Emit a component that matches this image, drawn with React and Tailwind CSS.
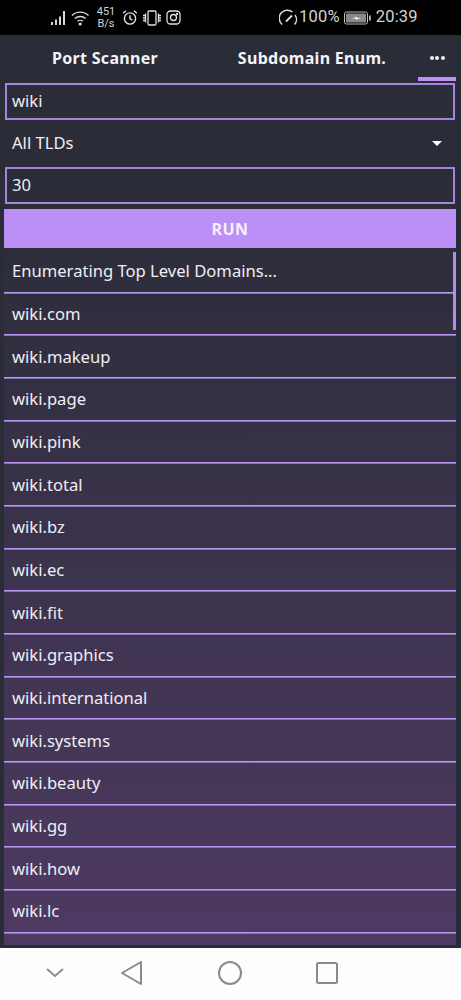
const domains = [
  'Enumerating Top Level Domains...',
  'wiki.com',
  'wiki.makeup',
  'wiki.page',
  'wiki.pink',
  'wiki.total',
  'wiki.bz',
  'wiki.ec',
  'wiki.fit',
  'wiki.graphics',
  'wiki.international',
  'wiki.systems',
  'wiki.beauty',
  'wiki.gg',
  'wiki.how',
  'wiki.lc',
];

const StatusBar = () => (
  <div className="h-[35px] bg-black flex items-center text-[#d4d4d4] font-['Roboto',sans-serif]">
    {/* signal */}
    <svg className="ml-[50px]" width="18" height="18" viewBox="0 0 18 18" fill="#d8d8d8">
      <rect x="1" y="13" width="2" height="3" />
      <rect x="5" y="10.5" width="2" height="5.5" />
      <rect x="9" y="7.5" width="2" height="8.5" />
      <rect x="13" y="2" width="2" height="14" />
    </svg>
    {/* wifi */}
    <svg className="ml-[3px]" width="19" height="18" viewBox="0 0 19 18" fill="none" stroke="#d8d8d8" strokeWidth="1.4">
      <path d="M1 6.5C5.5 2 13 2 17.5 6.5" />
      <path d="M3.8 9.5C6.8 6.8 11.7 6.8 14.7 9.5" />
      <path d="M6.6 12.3C8 11 10.5 11 11.9 12.3" />
      <circle cx="9.2" cy="15" r="0.9" fill="#d8d8d8" />
    </svg>
    <div className="ml-[5px] w-[22px] text-[11px] leading-[12px] text-center">
      <div>451</div>
      <div>B/s</div>
    </div>
    {/* alarm */}
    <svg className="ml-[5px]" width="16" height="17" viewBox="0 0 16 17" fill="none" stroke="#e0e0e0" strokeWidth="1.4">
      <circle cx="8" cy="9.5" r="5.6" />
      <path d="M8 6.3V9.7L10.4 11.2" />
      <path d="M1.2 4.2L4 1.8M14.8 4.2L12 1.8" />
    </svg>
    {/* vibrate */}
    <svg className="ml-[4px]" width="20" height="16" viewBox="0 0 20 16" fill="none" stroke="#e0e0e0" strokeWidth="1.3">
      <rect x="6" y="1" width="8" height="14" rx="1.2" />
      <path d="M3.5 3.5V12.5M1 5.5H3M1 8H3M1 10.5H3M16.5 3.5V12.5M17 5.5H19M17 8H19M17 10.5H19" />
    </svg>
    {/* instagram */}
    <svg className="ml-[4px]" width="15" height="15" viewBox="0 0 15 15" fill="none" stroke="#e0e0e0" strokeWidth="1.3">
      <rect x="1" y="1" width="13" height="13" rx="3.5" />
      <circle cx="7.5" cy="7.5" r="3" />
      <circle cx="11" cy="4" r="0.5" fill="#e0e0e0" />
    </svg>
    {/* gauge */}
    <svg className="ml-[98px]" width="19" height="18" viewBox="0 0 19 18" fill="none" stroke="#d8d8d8" strokeWidth="1.5">
      <path d="M3.2 15.5A7.5 7.5 0 0 1 13.5 3" />
      <path d="M16 6A7.5 7.5 0 0 1 15.5 15.5" />
      <path d="M7 12.5L13 6.5" strokeWidth="2" />
    </svg>
    <span className="ml-[1px] text-[16.5px] tracking-[0.2px]">100%</span>
    {/* battery */}
    <svg className="ml-[4px]" width="27" height="14" viewBox="0 0 27 14">
      <rect x="0.5" y="1" width="23" height="12" rx="2" fill="none" stroke="#bdbdbd" />
      <rect x="2" y="2.5" width="20" height="9" rx="1" fill="#8a8a8a" />
      <rect x="25" y="4.5" width="1.8" height="5" fill="#bdbdbd" />
      <path d="M8 7.5L13 5.8V7H17L12 8.8V7.5Z" fill="#fff" />
    </svg>
    <span className="ml-[5px] text-[16.5px] tracking-[0.2px]">20:39</span>
  </div>
);

const Tabs = () => (
  <div className="h-[46px] flex text-[16px] font-bold text-[#f4f4f6] tracking-[0.3px]">
    <div className="w-[210px] flex items-center justify-center">Port Scanner</div>
    <div className="w-[208px] pr-[4px] flex items-center justify-center whitespace-nowrap">Subdomain Enum.</div>
    <div className="w-[38px] border-b-4 border-[#bb8ff6] flex items-center justify-center gap-[1.5px] pt-[4px]">
      <span className="w-[4px] h-[4px] rounded-full bg-[#f4f4f6]" />
      <span className="w-[4px] h-[4px] rounded-full bg-[#f4f4f6]" />
      <span className="w-[4px] h-[4px] rounded-full bg-[#f4f4f6]" />
    </div>
  </div>
);

const Nav = () => (
  <div className="h-[52px] bg-[#fdfdfd] flex items-start">
    <svg className="ml-[45px] mt-[19px]" width="20" height="12" viewBox="0 0 20 12" fill="none" stroke="#8a8a8a" strokeWidth="1.8">
      <path d="M2 2L10 9L18 2" />
    </svg>
    <svg className="ml-[55px] mt-[12px]" width="24" height="26" viewBox="0 0 24 26" fill="none" stroke="#8a8a8a" strokeWidth="2" strokeLinejoin="round">
      <path d="M21 2V24L2 13Z" />
    </svg>
    <svg className="ml-[73px] mt-[12px]" width="26" height="26" viewBox="0 0 26 26" fill="none" stroke="#8a8a8a" strokeWidth="2">
      <circle cx="13" cy="13" r="11" />
    </svg>
    <svg className="ml-[72px] mt-[13px]" width="24" height="24" viewBox="0 0 24 24" fill="none" stroke="#8a8a8a" strokeWidth="2">
      <rect x="2" y="2" width="20" height="20" rx="1.5" />
    </svg>
  </div>
);

export default function App() {
  return (
    <div className="w-[461px] h-[1000px] overflow-hidden flex flex-col bg-[#2a2c38] font-['Noto_Sans',sans-serif] text-[16.6px] text-[#f0eef4]">
      <StatusBar />
      <Tabs />

      <div className="flex-1 min-h-0 flex flex-col pl-[4px] pr-[5px] pt-[2px] pb-[3px]">
        <div className="mx-[1px] h-[37px] flex items-center px-[5px] border-2 border-[#a385dc] shrink-0">wiki</div>
        <div className="h-[47px] flex items-center justify-between pl-[8px] pr-[14px] pb-[1px] shrink-0">
          <span>All TLDs</span>
          <div className="w-0 h-0 border-x-[5px] border-x-transparent border-t-[5px] border-t-white" />
        </div>
        <div className="mx-[1px] h-[37px] flex items-center px-[5px] border-2 border-[#a385dc] shrink-0">30</div>

        <button className="mt-[5px] h-[39px] w-full shrink-0 bg-[#bb8ff6] text-[#f6f0fe] text-[16px] font-bold tracking-[0.4px]">RUN</button>

        <div className="relative mt-[2px] flex-1 min-h-0 overflow-hidden bg-gradient-to-b from-[#2d2d3b] to-[#4e3a63]">
          {domains.map((d) => (
            <div key={d} className="h-[42.67px] flex items-center pl-[8px] pt-[2px] border-b border-[#bb96f0] shadow-[0_1px_0_#8a70b8] box-border">
              {d}
            </div>
          ))}
          {/* scrollbar thumb */}
          <div className="absolute top-[2px] right-0 w-[3px] h-[78px] bg-[#b28cec]" />
        </div>
      </div>

      <Nav />
    </div>
  );
}
